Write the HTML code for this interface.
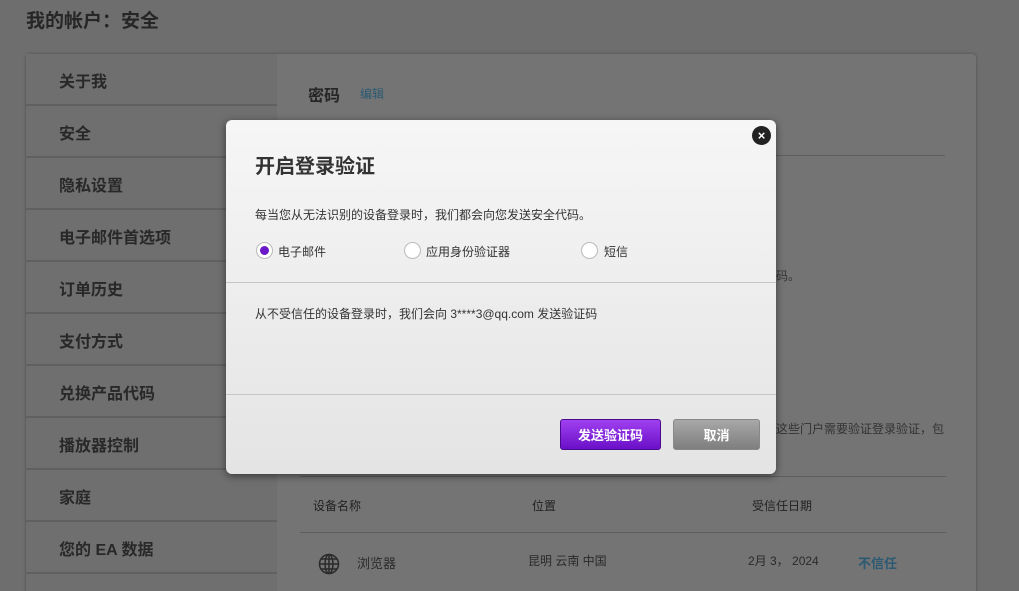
<!DOCTYPE html>
<html><head><meta charset="utf-8"><style>
*{margin:0;padding:0;box-sizing:border-box}
html,body{width:1019px;height:591px;overflow:hidden}
body{background:#6e6e6e;font-family:"Liberation Sans","Noto Sans CJK SC",sans-serif;position:relative;color:#2a2a2a}
.a{position:absolute;white-space:nowrap}
.h1{left:26px;top:6px;font-size:19px;font-weight:bold;color:#262626}
.card{left:26px;top:54px;width:950px;height:560px;background:#747474;border-radius:4px;box-shadow:0 0 3px rgba(0,0,0,.3)}
.side{left:26px;top:54px;width:251px;height:540px;background:#6f6f6f}
.it{position:absolute;left:0;width:251px;height:52px;border-bottom:2px solid #606060;font-size:16px;font-weight:bold;color:#282828;padding:14px 0 0 33px}
.ln{position:absolute;height:1px;background:#5e5e5e}
.dlg{left:226px;top:120px;width:550px;height:354px;background:linear-gradient(#f6f6f6,#e4e4e4);border-radius:6px;box-shadow:0 2px 8px rgba(0,0,0,.5)}
.rb{position:absolute;width:17px;height:17px;border-radius:50%;border:1px solid #bbb;background:#fff}
.btn{position:absolute;height:31px;border-radius:3px;color:#fff;font-size:13px;font-weight:bold;text-align:center;line-height:31px}
</style></head><body>
<div class="a h1">我的帐户：安全</div>
<div class="a card"></div>
<div class="a side">
<div class="it" style="top:0">关于我</div>
<div class="it" style="top:52px">安全</div>
<div class="it" style="top:104px">隐私设置</div>
<div class="it" style="top:156px">电子邮件首选项</div>
<div class="it" style="top:208px">订单历史</div>
<div class="it" style="top:260px">支付方式</div>
<div class="it" style="top:312px">兑换产品代码</div>
<div class="it" style="top:364px">播放器控制</div>
<div class="it" style="top:416px">家庭</div>
<div class="it" style="top:468px">您的 EA 数据</div>
</div>
<div class="a" style="left:308px;top:82px;font-size:16px;font-weight:bold;color:#262626">密码</div>
<div class="a" style="left:360px;top:85px;font-size:12px;color:#2b5a72">编辑</div>
<div class="ln" style="left:775px;top:155px;width:170px"></div>
<div class="a" style="left:776px;top:267px;font-size:12px;color:#333">码。</div>
<div class="a" style="left:776px;top:420px;font-size:12px;color:#333">这些门户需要验证登录验证，包</div>
<div class="ln" style="left:300px;top:476px;width:646px"></div>
<div class="ln" style="left:300px;top:532px;width:646px"></div>
<div class="a" style="left:313px;top:497px;font-size:12px;color:#222">设备名称</div>
<div class="a" style="left:532px;top:497px;font-size:12px;color:#222">位置</div>
<div class="a" style="left:752px;top:497px;font-size:12px;color:#222">受信任日期</div>
<svg class="a" style="left:318px;top:553px" width="22" height="22" viewBox="0 0 22 22" fill="none" stroke="#2a2a2a" stroke-width="1.5"><circle cx="11" cy="11" r="9.5"/><ellipse cx="11" cy="11" rx="4" ry="9.5"/><path d="M1.5 11h19M3 6h16M3 16h16M11 1.5v19"/></svg>
<div class="a" style="left:357px;top:553px;font-size:13px;color:#2a2a2a">浏览器</div>
<div class="a" style="left:528px;top:552px;font-size:12px;color:#2a2a2a">昆明 云南 中国</div>
<div class="a" style="left:748px;top:552px;font-size:12px;color:#2a2a2a">2月 3， 2024</div>
<div class="a" style="left:858px;top:553px;font-size:13px;font-weight:bold;color:#2b5a72">不信任</div>

<div class="a dlg">
<div style="position:absolute;right:5px;top:6px;width:19px;height:19px;border-radius:50%;background:#222;color:#fff;font-size:13px;font-weight:bold;text-align:center;line-height:19px">×</div>
<div class="a" style="left:29px;top:30px;font-size:20px;font-weight:bold;color:#333">开启登录验证</div>
<div class="a" style="left:29px;top:86px;font-size:12px;color:#333">每当您从无法识别的设备登录时，我们都会向您发送安全代码。</div>
<div class="rb" style="left:30px;top:122px"><div style="position:absolute;left:3px;top:3px;width:9px;height:9px;border-radius:50%;background:#6a18c8"></div></div>
<div class="a" style="left:52px;top:123px;font-size:12px;color:#333">电子邮件</div>
<div class="rb" style="left:178px;top:122px"></div>
<div class="a" style="left:200px;top:123px;font-size:12px;color:#333">应用身份验证器</div>
<div class="rb" style="left:355px;top:122px"></div>
<div class="a" style="left:378px;top:123px;font-size:12px;color:#333">短信</div>
<div class="ln" style="left:0;top:162px;width:550px;background:#c6c6c6"></div>
<div class="a" style="left:29px;top:185px;font-size:12px;color:#333">从不受信任的设备登录时，我们会向 3****3@qq.com 发送验证码</div>
<div class="ln" style="left:0;top:274px;width:550px;background:#c6c6c6"></div>
<div class="btn" style="left:334px;top:299px;width:101px;background:linear-gradient(#a040f0,#6a10c8);border:1px solid #4a0a90">发送验证码</div>
<div class="btn" style="left:447px;top:299px;width:87px;background:linear-gradient(#a8a8a8,#7e7e7e);border:1px solid #888">取消</div>
</div>
</body></html>
